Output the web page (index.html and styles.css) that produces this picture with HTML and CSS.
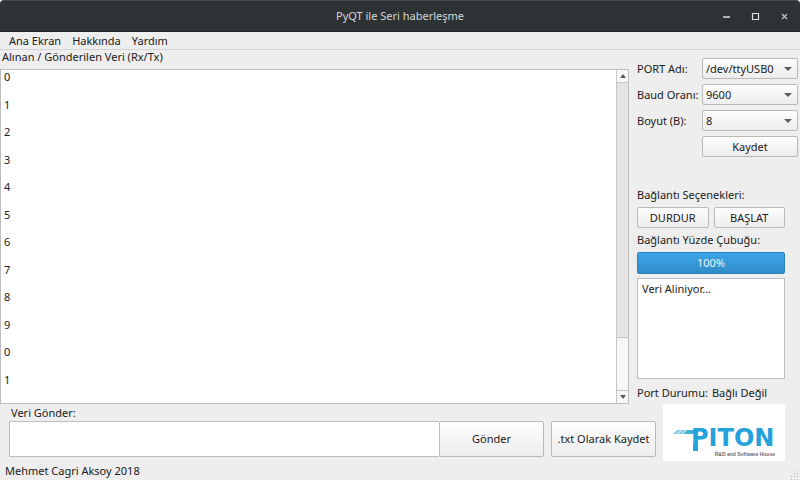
FILE: index.html
```
<!DOCTYPE html>
<html lang="tr">
<head>
<meta charset="utf-8">
<meta name="viewport" content="width=device-width, initial-scale=1">
<title>PyQT ile Seri haberleşme</title>
<link rel="stylesheet" href="styles.css">
</head>
<body>
<header class="titlebar">
  <h1 class="title">PyQT ile Seri haberleşme</h1>
  <div class="window-buttons">
    <button class="window-button" type="button" aria-label="Küçült"><svg width="9" height="9" viewBox="0 0 9 9"><path d="M1 5h7" stroke="#aeb1b2" stroke-width="2"/></svg></button>
    <button class="window-button" type="button" aria-label="Büyüt"><svg width="9" height="9" viewBox="0 0 9 9"><path d="M1.5 1.500h6v6h-6z" fill="none" stroke="#dcdedf" stroke-width="1.2"/></svg></button>
    <button class="window-button" type="button" aria-label="Kapat"><svg width="9" height="9" viewBox="0 0 9 9"><path d="M2 2l5 5M7 2l-5 5" stroke="#c6c9ca" stroke-width="1.1"/></svg></button>
  </div>
</header>

<nav class="menubar">
  <button class="menu" type="button">Ana Ekran</button>
  <button class="menu" type="button">Hakkında</button>
  <button class="menu" type="button">Yardım</button>
</nav>

<main class="content">
  <div class="workspace">
    <section class="receive">
      <h2 class="caption" id="log-label">Alınan / Gönderilen Veri (Rx/Tx)</h2>
      <div class="log-frame">
        <div class="log" role="log" aria-labelledby="log-label" tabindex="0">
          <p>0</p><p>1</p><p>2</p><p>3</p><p>4</p><p>5</p><p>6</p><p>7</p><p>8</p><p>9</p><p>0</p><p>1</p>
        </div>
        <div class="scrollbar">
          <button class="scroll-button" type="button" aria-label="Yukarı"><svg width="6" height="4" viewBox="0 0 6 4"><path d="M0 4l3-4 3 4z" fill="#5a5a5a"/></svg></button>
          <div class="scroll-track"><div class="scroll-thumb"></div></div>
          <button class="scroll-button" type="button" aria-label="Aşağı"><svg width="6" height="4" viewBox="0 0 6 4"><path d="M0 0l3 4 3-4z" fill="#5a5a5a"/></svg></button>
        </div>
      </div>
    </section>

    <aside class="side">
      <form class="settings">
        <label for="port">PORT Adı:</label>
        <span class="combo"><select id="port"><option>/dev/ttyUSB0</option></select></span>
        <label for="baud">Baud Oranı:</label>
        <span class="combo"><select id="baud"><option>9600</option></select></span>
        <label for="size">Boyut (B):</label>
        <span class="combo"><select id="size"><option>8</option></select></span>
        <button class="button save" type="button">Kaydet</button>
      </form>
      <section class="connection">
        <h2 class="caption">Bağlantı Seçenekleri:</h2>
        <div class="button-pair">
          <button class="button" type="button">DURDUR</button>
          <button class="button" type="button">BAŞLAT</button>
        </div>
        <h2 class="caption" id="progress-label">Bağlantı Yüzde Çubuğu:</h2>
        <div class="progress" role="progressbar" aria-labelledby="progress-label" aria-valuenow="100" aria-valuemin="0" aria-valuemax="100">100%</div>
        <textarea class="messages" aria-label="Durum iletileri" readonly>Veri Aliniyor...</textarea>
        <p class="port-state"><span>Port Durumu:</span><span>Bağlı Değil</span></p>
      </section>
    </aside>
  </div>

  <div class="bottom">
    <form class="send">
      <label class="caption send-label" for="message">Veri Gönder:</label>
      <div class="send-row">
        <input class="message" id="message" type="text">
        <button class="button send-button" type="button">Gönder</button>
        <button class="button export-button" type="button">.txt Olarak Kaydet</button>
      </div>
    </form>
    <svg class="logo" width="122" height="57" viewBox="0 0 122 57">
      <path d="M14 26h4l-4 4h-4zM19 26h4l-4 4h-4z" fill="#85cceb"/>
      <path d="M24 26h8v4H20z" fill="#45b0de"/>
      <path d="M30 40h5v7h-5z" fill="#25a2da"/>
      <text class="logo-name" x="28" y="42">PITON</text>
      <text class="logo-tagline" x="112" y="52" text-anchor="end">R&amp;D and Software House</text>
    </svg>
  </div>
</main>

<footer class="statusbar">
  <span>Mehmet Cagri Aksoy 2018</span>
  <svg class="grip" width="10" height="10" viewBox="0 0 10 10"><path d="M7 0h1v1H7zM4 3h1v1H4zM7 3h1v1H7zM1 6h1v1H1zM4 6h1v1H4zM7 6h1v1H7zM1 9h1v1H1zM4 9h1v1H4zM7 9h1v1H7z" fill="#b5b5b5"/></svg>
</footer>
</body>
</html>
```
FILE: styles.css
```
* {
  box-sizing: border-box;
}

body {
  display: flex;
  flex-direction: column;
  min-height: 100vh;
  margin: 0;
  background: #eeeeee;
  color: #202020;
  font-family: "Noto Sans", "Open Sans", sans-serif;
  font-size: 11px;
  line-height: 16px;
}

h1, h2, p {
  margin: 0;
  font-size: inherit;
  font-weight: 400;
}

button, input, select, textarea {
  margin: 0;
  color: inherit;
  font: inherit;
}

.titlebar {
  display: grid;
  grid-template-columns: 1fr auto 1fr;
  align-items: center;
  height: 32px;
  border-top: 1px solid #44494b;
  border-bottom: 1px solid #202426;
  border-radius: 4px 4px 0 0;
  background: #2d3235;
  color: #d5d8d9;
}

.title {
  grid-column: 2;
}

.window-buttons {
  display: flex;
  justify-content: flex-end;
  gap: 12px;
  padding-right: 7px;
}

.window-button {
  display: grid;
  place-items: center;
  width: 17px;
  height: 17px;
  padding: 0;
  border: 0;
  background: none;
}

.menubar {
  display: flex;
  gap: 11px;
  height: 18px;
  padding: 0 9px;
  border-bottom: 1px solid #d4d4d4;
}

.menu {
  padding: 1px 0 0;
  border: 0;
  background: none;
  line-height: 16px;
}

.content {
  display: flex;
  flex: 1;
  flex-direction: column;
}

.workspace {
  display: flex;
  flex: 1;
  gap: 8px;
}

.receive {
  display: flex;
  flex: 1;
  flex-direction: column;
}

.receive .caption {
  height: 19px;
  padding-left: 2px;
  line-height: 14px;
}

.log-frame {
  display: flex;
  flex: 1;
  border: 1px solid #bdbdbd;
  background: #ffffff;
}

.log {
  display: flex;
  flex: 1;
  flex-direction: column;
  justify-content: space-between;
  padding: 0 3px 16px;
  line-height: 14px;
}

.scrollbar {
  display: flex;
  flex-direction: column;
  width: 12px;
  border-left: 1px solid #c6c6c6;
  background: #f7f7f7;
}

.scroll-button {
  display: grid;
  place-items: center;
  height: 12px;
  padding: 0;
  border: 0;
  background: #f8f8f8;
}

.scroll-track {
  display: flex;
  flex: 1;
  flex-direction: column;
  justify-content: flex-start;
  border: solid #c6c6c6;
  border-width: 1px 0;
}

.scroll-thumb {
  height: 83%;
  border-bottom: 1px solid #c6c6c6;
  background: #e4e4e4;
}

.side {
  display: flex;
  flex-direction: column;
  justify-content: space-between;
  width: 163px;
  padding: 8px 2px 3px 0;
}

.settings {
  display: grid;
  grid-template-columns: 1fr 96px;
  gap: 5px 0;
  align-items: center;
}

.combo {
  position: relative;
  display: block;
  height: 21px;
}

.combo::after {
  position: absolute;
  top: 9px;
  right: 6px;
  border: 4px solid transparent;
  border-top-color: #5c5c5c;
  border-bottom: 0;
  content: "";
  pointer-events: none;
}

.combo select,
.button {
  border: 1px solid #b9b9b9;
  border-radius: 2px;
  background: linear-gradient(#fdfdfd, #ededed);
}

.combo select {
  width: 100%;
  height: 100%;
  padding: 0 14px 0 3px;
  appearance: none;
}

.button {
  height: 21px;
  padding: 0;
  line-height: 16px;
}

.save {
  grid-column: 2;
}

.connection {
  display: flex;
  flex-direction: column;
  padding-right: 13px;
}

.button-pair {
  display: grid;
  grid-template-columns: 1fr 1fr;
  gap: 5px;
  margin: 4px 0;
}

.progress {
  height: 22px;
  margin: 4px 0;
  border: 1px solid #2a7fb8;
  border-radius: 2px;
  background: linear-gradient(#3da5e8, #308cc6);
  color: #e8f4fc;
  line-height: 20px;
  text-align: center;
}

.messages {
  height: 101px;
  padding: 2px 4px;
  border: 1px solid #bdbdbd;
  background: #ffffff;
  outline: 0;
  resize: none;
}

.port-state {
  display: flex;
  gap: 4px;
  padding-top: 6px;
}

.bottom {
  display: flex;
  gap: 7px;
  padding-right: 15px;
}

.send {
  flex: 1;
  padding-left: 9px;
}

.send-label {
  display: block;
  padding: 1px 2px 0;
}

.send-row {
  display: flex;
}

.message {
  flex: 1;
  min-width: 0;
  height: 36px;
  border: 1px solid #bdbdbd;
  border-right: 0;
  background: #ffffff;
}

.send-row .button {
  width: 105px;
  height: 36px;
}

.send-row .export-button {
  margin-left: 7px;
}

.logo {
  display: block;
  flex: none;
  background: #ffffff;
}

.logo-name {
  fill: #25a2da;
  font: 700 24px "DejaVu Sans", sans-serif;
}

.logo-tagline {
  fill: #6b6b6b;
  font: 700 5px "Liberation Sans", sans-serif;
}

.statusbar {
  display: flex;
  align-items: center;
  justify-content: space-between;
  height: 19px;
  padding-left: 5px;
}

.grip {
  align-self: flex-end;
}
```
